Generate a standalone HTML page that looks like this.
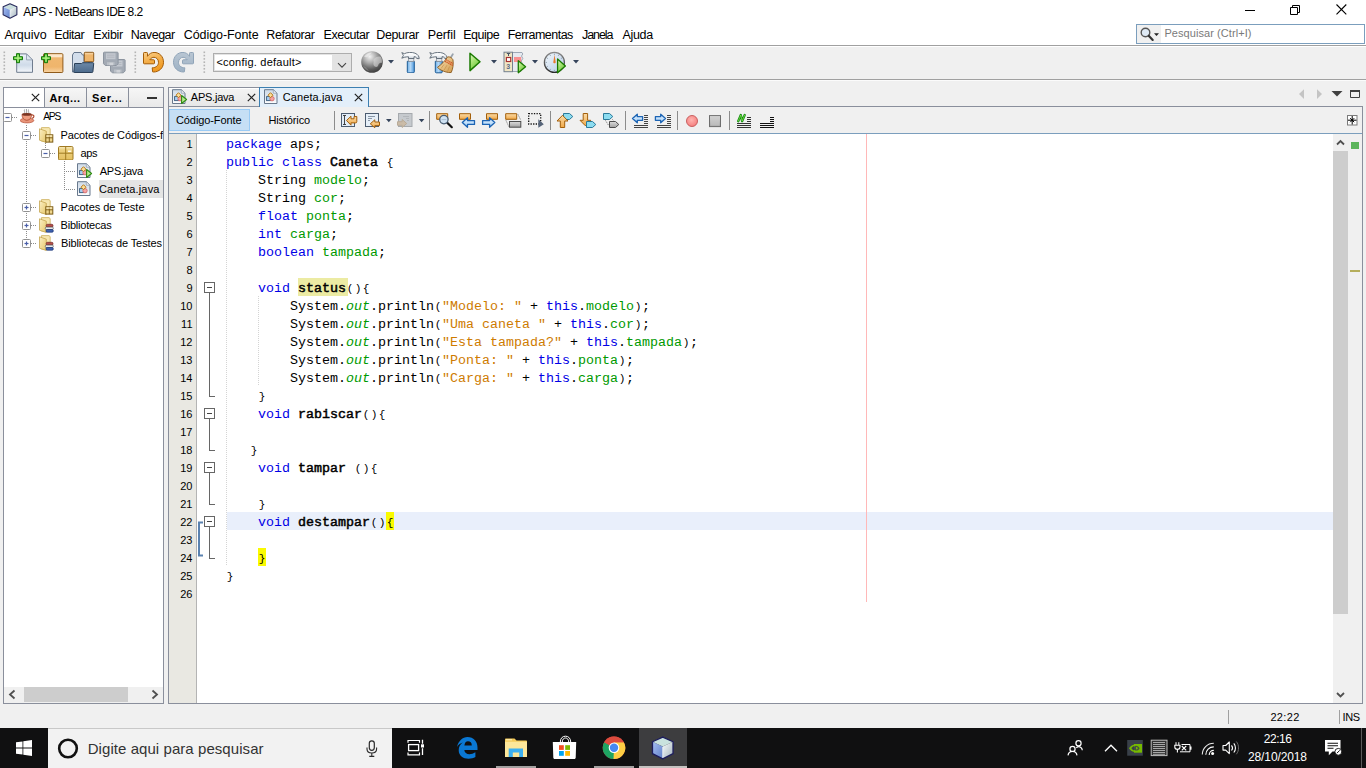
<!DOCTYPE html>
<html lang="pt-BR">
<head>
<meta charset="utf-8">
<title>APS - NetBeans IDE 8.2</title>
<style>
*{box-sizing:border-box;margin:0;padding:0}
html,body{width:1366px;height:768px;overflow:hidden;background:#f0f0f0;font-family:"Liberation Sans","DejaVu Sans",sans-serif;font-size:11px;color:#000}
body{position:relative}
div,svg,span.a{position:absolute}
.t{white-space:nowrap}
.code{left:226px;height:18px;font-family:"Liberation Mono","DejaVu Sans Mono",monospace;font-size:12px;line-height:18px;white-space:pre;color:#000;transform:scaleX(1.1109);transform-origin:0 0}
.ln{left:168.5px;width:24px;height:18px;text-align:right;font-size:11px;line-height:18px;letter-spacing:0;color:#000}
.k{color:#0000e6}.f{color:#009900}.s{color:#ce7b00}.i{color:#009900;font-style:italic}.b{font-weight:normal;-webkit-text-stroke:0.45px #000}
.p{display:inline-block;width:7.2px;font-size:10px;text-align:center;vertical-align:0.3px}
.hl{background:#ecebA3}.y{background:#fafa00}
.box{width:11px;height:11px;border:1px solid #666;background:#fff}
.box i{position:absolute;left:2px;top:4px;width:5px;height:1px;background:#444}
.vl{width:1px;background:#666}
.hz{height:1px;background:#666}
.sep{width:1px;background:#8c8c8c}
.xb{width:9px;height:9px}
</style>
</head>
<body>
<div id="titlebar-menubar" style="left:0;top:0;width:0;height:0">
<div style="left:0;top:0;width:1366px;height:45px;background:#fff"></div>
<svg style="left:2px;top:2.7px" width="16" height="16" viewBox="0 0 16 16.300"><defs><linearGradient id="cbL" x1="0" y1="0" x2="1" y2="1"><stop offset="0" stop-color="#a6bef4"/><stop offset="1" stop-color="#6080c8"/></linearGradient>
<linearGradient id="cbR" x1="0" y1="0" x2="1" y2="1"><stop offset="0" stop-color="#f6fafa"/><stop offset="1" stop-color="#a2b2bc"/></linearGradient></defs>
<path d="M8 0.700L15 3.900L8 7.200L1 3.900z" fill="#c9dedd"/>
<path d="M1 3.900L8 7.200V15.600L1 12z" fill="url(#cbL)"/>
<path d="M15 3.900L8 7.200V15.600L15 12z" fill="url(#cbR)"/>
<path d="M8 7.400V15" stroke="#eef4ff" stroke-width="0.800" opacity="0.800"/>
<path d="M8 0.700L15 3.900V12L8 15.600L1 12V3.900z" fill="none" stroke="#2a2c5e" stroke-width="1.100" stroke-linejoin="round"/></svg>
<div class="t" style="left:23.20px;top:3.5px;font-size:12px;line-height:16px;letter-spacing:-0.506px;color:#000;">APS - NetBeans IDE 8.2</div>
<div style="left:1245px;top:10px;width:10px;height:1px;background:#000"></div>
<svg style="left:1289px;top:4px" width="12" height="12" viewBox="0 0 12 12"><path d="M1.5 3.5h7v7h-7zM3.5 3.5v-2h7v7h-2" fill="none" stroke="#000" stroke-width="1"/></svg>
<svg style="left:1336px;top:4.2px" width="12" height="12" viewBox="0 0 12 12"><path d="M0.5 0.5l9.800 9.800M10.300 0.500l-9.800 9.800" fill="none" stroke="#000" stroke-width="1.1"/></svg>
<div class="t" style="left:4.40px;top:26.5px;font-size:12.5px;line-height:16px;letter-spacing:-0.026px;color:#000;">Arquivo</div>
<div class="t" style="left:54.30px;top:26.5px;font-size:12.5px;line-height:16px;letter-spacing:-0.442px;color:#000;">Editar</div>
<div class="t" style="left:93.30px;top:26.5px;font-size:12.5px;line-height:16px;letter-spacing:-0.259px;color:#000;">Exibir</div>
<div class="t" style="left:130.80px;top:26.5px;font-size:12.5px;line-height:16px;letter-spacing:-0.463px;color:#000;">Navegar</div>
<div class="t" style="left:183.80px;top:26.5px;font-size:12.5px;line-height:16px;letter-spacing:-0.078px;color:#000;">Código-Fonte</div>
<div class="t" style="left:266.30px;top:26.5px;font-size:12.5px;line-height:16px;letter-spacing:-0.422px;color:#000;">Refatorar</div>
<div class="t" style="left:323.50px;top:26.5px;font-size:12.5px;line-height:16px;letter-spacing:-0.453px;color:#000;">Executar</div>
<div class="t" style="left:376.30px;top:26.5px;font-size:12.5px;line-height:16px;letter-spacing:-0.379px;color:#000;">Depurar</div>
<div class="t" style="left:427.70px;top:26.5px;font-size:12.5px;line-height:16px;letter-spacing:-0.096px;color:#000;">Perfil</div>
<div class="t" style="left:463.20px;top:26.5px;font-size:12.5px;line-height:16px;letter-spacing:-0.487px;color:#000;">Equipe</div>
<div class="t" style="left:507.70px;top:26.5px;font-size:12.5px;line-height:16px;letter-spacing:-0.523px;color:#000;">Ferramentas</div>
<div class="t" style="left:582.00px;top:26.5px;font-size:12.5px;line-height:16px;letter-spacing:-1.072px;color:#000;">Janela</div>
<div class="t" style="left:622.50px;top:26.5px;font-size:12.5px;line-height:16px;letter-spacing:-0.334px;color:#000;">Ajuda</div>
<div style="left:1136px;top:24px;width:229px;height:20px;background:#fff;border:1px solid #7b9ebd"></div>
<div style="left:1137px;top:25px;width:24px;height:18px;background:#f0f0f0"></div>
<svg style="left:1140px;top:27px" width="20" height="15" viewBox="0 0 20 15"><circle cx="5.5" cy="5.5" r="4.3" fill="#dfeaf5" stroke="#555" stroke-width="1.4"/><path d="M8.7 8.7l4 4.2" stroke="#333" stroke-width="2.2" stroke-linecap="round"/><path d="M14 6.2h5l-2.5 2.8z" fill="#222"/></svg>
<div class="t" style="left:1164.40px;top:24.8px;font-size:11px;line-height:16px;letter-spacing:0.073px;color:#7a7a7a;">Pesquisar (Ctrl+I)</div>
<div style="left:0;top:45px;width:1366px;height:1px;background:#a0a0a0"></div>
<div style="left:0;top:46px;width:1366px;height:1px;background:#fff"></div>
</div>
<div id="main-toolbar" style="left:0;top:0;width:0;height:0">
<div style="left:0;top:79px;width:1366px;height:1px;background:#a0a0a0"></div>
<div style="left:0;top:80px;width:1366px;height:1px;background:#fbfbfb"></div>
<svg style="left:3px;top:51px" width="3" height="23" viewBox="0 0 3 23"><rect x="0.5" y="0.5" width="1.6" height="1.6" fill="#b4b4b4"/><rect x="0.5" y="3.8" width="1.6" height="1.6" fill="#b4b4b4"/><rect x="0.5" y="7.1" width="1.6" height="1.6" fill="#b4b4b4"/><rect x="0.5" y="10.4" width="1.6" height="1.6" fill="#b4b4b4"/><rect x="0.5" y="13.7" width="1.6" height="1.6" fill="#b4b4b4"/><rect x="0.5" y="17" width="1.6" height="1.6" fill="#b4b4b4"/><rect x="0.5" y="20.3" width="1.6" height="1.6" fill="#b4b4b4"/></svg>
<svg style="left:134px;top:51px" width="3" height="23" viewBox="0 0 3 23"><rect x="0.5" y="0.5" width="1.6" height="1.6" fill="#b4b4b4"/><rect x="0.5" y="3.8" width="1.6" height="1.6" fill="#b4b4b4"/><rect x="0.5" y="7.1" width="1.6" height="1.6" fill="#b4b4b4"/><rect x="0.5" y="10.4" width="1.6" height="1.6" fill="#b4b4b4"/><rect x="0.5" y="13.7" width="1.6" height="1.6" fill="#b4b4b4"/><rect x="0.5" y="17" width="1.6" height="1.6" fill="#b4b4b4"/><rect x="0.5" y="20.3" width="1.6" height="1.6" fill="#b4b4b4"/></svg>
<svg style="left:203px;top:51px" width="3" height="23" viewBox="0 0 3 23"><rect x="0.5" y="0.5" width="1.6" height="1.6" fill="#b4b4b4"/><rect x="0.5" y="3.8" width="1.6" height="1.6" fill="#b4b4b4"/><rect x="0.5" y="7.1" width="1.6" height="1.6" fill="#b4b4b4"/><rect x="0.5" y="10.4" width="1.6" height="1.6" fill="#b4b4b4"/><rect x="0.5" y="13.7" width="1.6" height="1.6" fill="#b4b4b4"/><rect x="0.5" y="17" width="1.6" height="1.6" fill="#b4b4b4"/><rect x="0.5" y="20.3" width="1.6" height="1.6" fill="#b4b4b4"/></svg>
<svg style="left:12px;top:52px" width="22" height="22" viewBox="0 0 22 22"><defs><linearGradient id="nf" x1="0" y1="0" x2="0" y2="1"><stop offset="0" stop-color="#eef3f9"/><stop offset="0.6" stop-color="#cfdbe9"/><stop offset="1" stop-color="#f4f7fb"/></linearGradient></defs>
<path d="M4.700 1.900h9.800l6 6v12.400h-15.800z" fill="url(#nf)" stroke="#6f7c8e" stroke-width="1"/><path d="M14.500 1.900v6h6z" fill="#dfe7f1" stroke="#8a97a8" stroke-width="0.800" stroke-linejoin="round"/><g transform="translate(1,1.200)"><path d="M3.5 0.5h3v3h3v3h-3v3h-3v-3h-3v-3h3z" fill="#4fc02c" stroke="#177a0c" stroke-width="1"/><path d="M4.400 1.500h1.200v2.900h2.900v1.200h-2.900v2.900h-1.200v-2.900h-2.900v-1.200h2.900z" fill="#b9f48e"/></g></svg>
<svg style="left:40px;top:52px" width="24" height="22" viewBox="0 0 24 22"><defs><linearGradient id="np" x1="0" y1="0" x2="0" y2="1"><stop offset="0" stop-color="#f0b871"/><stop offset="0.7" stop-color="#efb56c"/><stop offset="1" stop-color="#f7d3a2"/></linearGradient></defs>
<rect x="3.500" y="1.700" width="19.400" height="18.800" rx="1" fill="url(#np)" stroke="#8f5a1a" stroke-width="1"/><rect x="4.200" y="2.300" width="18" height="3" fill="#fbe7cb"/><g transform="translate(1,1.200)"><path d="M3.5 0.5h3v3h3v3h-3v3h-3v-3h-3v-3h3z" fill="#4fc02c" stroke="#177a0c" stroke-width="1"/><path d="M4.400 1.500h1.200v2.900h2.900v1.200h-2.900v2.900h-1.200v-2.900h-2.900v-1.200h2.900z" fill="#b9f48e"/></g></svg>
<svg style="left:71px;top:51px" width="24" height="23" viewBox="0 0 24 23"><defs><linearGradient id="op" x1="0" y1="0" x2="0" y2="1"><stop offset="0" stop-color="#6c89a8"/><stop offset="1" stop-color="#4d6b8c"/></linearGradient>
<linearGradient id="ob" x1="0" y1="0" x2="0" y2="1"><stop offset="0" stop-color="#fbe3c0"/><stop offset="0.3" stop-color="#efb66c"/><stop offset="1" stop-color="#eeb46a"/></linearGradient></defs>
<path d="M1.500 21v-17l1.500-2.500h7l1.500 2.500h1.500v17z" fill="#d3deeb" stroke="#66778c" stroke-width="1" stroke-linejoin="round"/>
<rect x="13.300" y="1.300" width="9.400" height="9.400" rx="0.800" fill="url(#ob)" stroke="#8f5a1a" stroke-width="1"/>
<path d="M18 11v1.500" stroke="#5a4a3a" stroke-width="1"/>
<path d="M3.600 12.500h7l1-0.800h10.300c0.600 0 0.900 0.400 0.800 1l-0.800 8c0 0.500-0.400 0.800-1 0.800h-17.300c-0.600 0-0.800-0.400-0.800-0.800z" fill="url(#op)" stroke="#2b4058" stroke-width="1" stroke-linejoin="round"/></svg>
<svg style="left:102px;top:51px" width="24" height="23" viewBox="0 0 24 23"><g transform="translate(8,8)"><path d="M0.500 1.300c0-0.500 0.300-0.800 0.800-0.800h13c0.500 0 0.800 0.300 0.800 0.800v10.700l-1.800 1.800h-11l-1.800-1.800z" fill="#a3aab4" stroke="#8c949f" stroke-width="1"/><rect x="3" y="1.500" width="9.500" height="6" fill="#c3c8cf"/><path d="M4 3.500h7.500M4 5.500h7.500" stroke="#aeb4bc" stroke-width="0.800"/><rect x="4" y="10.500" width="7.500" height="3" fill="#bcc1c8"/><rect x="6.500" y="11" width="3.500" height="2.500" fill="#d0d3d8"/></g><g transform="translate(1,0.7)"><path d="M0.500 1.300c0-0.500 0.300-0.800 0.800-0.800h13c0.500 0 0.800 0.300 0.800 0.800v10.700l-1.800 1.800h-11l-1.800-1.800z" fill="#a3aab4" stroke="#8c949f" stroke-width="1"/><rect x="3" y="1.500" width="9.500" height="6" fill="#c3c8cf"/><path d="M4 3.500h7.500M4 5.500h7.500" stroke="#aeb4bc" stroke-width="0.800"/><rect x="4" y="10.500" width="7.500" height="3" fill="#bcc1c8"/><rect x="6.500" y="11" width="3.500" height="2.500" fill="#d0d3d8"/></g></svg>
<svg style="left:142.8px;top:52.4px" width="21" height="21" viewBox="0 0 21 21"><defs><linearGradient id="ud" x1="0" y1="0" x2="0.300" y2="1"><stop offset="0" stop-color="#f9cf8c"/><stop offset="0.5" stop-color="#f4ae48"/><stop offset="1" stop-color="#f09a22"/></linearGradient></defs>
<path d="M0.500 1.300Q0.500 0.500 1.300 0.500L3.700 0.500Q4.500 0.500 4.500 1.300L4.500 4.300C6 1.600 9 0.400 11 0.400C16.500 0.400 20.500 4.500 20.500 10.300C20.500 16 16 20 10.500 20L9.600 19.800L9.200 15.800C13 15.800 15.500 13.500 15.500 10.300C15.500 7 13 5.300 11 5.300C9.500 5.300 8 6 6.800 7.700L10.800 7.800Q11.500 7.800 11.500 8.600L11.500 11Q11.500 11.800 10.700 11.800L1.300 11.800Q0.500 11.800 0.500 11Z" fill="url(#ud)" stroke="#a45c06" stroke-width="1" stroke-linejoin="round"/></svg>
<svg style="left:173px;top:52.4px" width="21" height="21" viewBox="0 0 21 21"><defs><linearGradient id="rd" x1="0" y1="0" x2="0" y2="1"><stop offset="0" stop-color="#b9c6d3"/><stop offset="1" stop-color="#9db1c4"/></linearGradient></defs>
<g transform="translate(21,0) scale(-1,1)"><path d="M0.500 1.300Q0.500 0.500 1.300 0.500L3.700 0.500Q4.500 0.500 4.500 1.300L4.500 4.300C6 1.600 9 0.400 11 0.400C16.500 0.400 20.500 4.500 20.500 10.300C20.500 16 16 20 10.500 20L9.600 19.800L9.200 15.800C13 15.800 15.500 13.500 15.500 10.300C15.500 7 13 5.300 11 5.300C9.500 5.300 8 6 6.800 7.700L10.800 7.800Q11.500 7.800 11.500 8.600L11.500 11Q11.500 11.800 10.700 11.800L1.300 11.800Q0.500 11.800 0.500 11Z" fill="url(#rd)" stroke="#90a4b8" stroke-width="1" stroke-linejoin="round"/></g></svg>
<div style="left:213px;top:53px;width:139px;height:19px;background:#e3e3e3;border:1px solid #adadad"></div>
<div style="left:215px;top:55px;width:117px;height:15px;background:#fff"></div>
<div class="t" style="left:216.40px;top:54.0px;font-size:11px;line-height:16px;letter-spacing:0.227px;color:#000;">&lt;config. default&gt;</div>
<svg style="left:337px;top:61.500px" width="10" height="7" viewBox="0 0 10 7"><path d="M1 1.2l4 4 4-4" fill="none" stroke="#444" stroke-width="1.1"/></svg>
<svg style="left:361px;top:51px" width="22" height="22" viewBox="0 0 22 22"><defs><radialGradient id="gl" cx="0.400" cy="0.250" r="0.800"><stop offset="0" stop-color="#f2f2f2"/><stop offset="0.350" stop-color="#b0b0b0"/><stop offset="0.750" stop-color="#5a5a5a"/><stop offset="1" stop-color="#3a3a3a"/></radialGradient></defs>
<circle cx="11" cy="11" r="10.800" fill="url(#gl)"/>
<path d="M12.500 8.500c2-2.500 5-3.500 7.500-2.500c1 2 1.200 4 0.800 6c-1.500-0.800-3 0.200-3.500 2c-0.500 2-2 2.500-3.500 1.500c-1.200-1-1.800-2.500-1.200-4c0.300-1-0.500-2-0.100-3z" fill="#d8d8d8" opacity="0.600"/>
<path d="M3 5.500c2-2.500 5-4 8-4c-1 1.500-3 2-4 3.500c-1 1.500-2.500 1.500-4 0.500z" fill="#ffffff" opacity="0.450"/>
<path d="M2 15c1.500 0 3 1 4 2.500c0.800 1.200 2 2 3 2.300c-3 0-5.500-1.800-7-4.800z" fill="#9a9a9a" opacity="0.500"/></svg>
<svg style="left:388px;top:59.8px" width="6" height="4" viewBox="0 0 6 4"><path d="M0 0h6l-3 3.600z" fill="#36455c"/></svg>
<svg style="left:401px;top:52px" width="19" height="21" viewBox="0 0 19 21"><defs><linearGradient id="hm" x1="0" y1="0" x2="1" y2="0"><stop offset="0" stop-color="#6fb0e8"/><stop offset="0.450" stop-color="#b4d8f6"/><stop offset="1" stop-color="#4f98dc"/></linearGradient>
<linearGradient id="hh" x1="0" y1="0" x2="0" y2="1"><stop offset="0" stop-color="#ffffff"/><stop offset="0.500" stop-color="#f4f6f8"/><stop offset="1" stop-color="#c4ccd6"/></linearGradient></defs><path d="M6.300 9.300h7v10.500c0 0.600-0.400 1-1 1h-5c-0.600 0-1-0.400-1-1z" fill="url(#hm)" stroke="#1c5a94" stroke-width="1"/>
<rect x="7.600" y="6" width="5.200" height="3.500" fill="#dfe3e8" stroke="#8a929c" stroke-width="0.800"/>
<path d="M0.800 0.600L3.400 1.700C6 0.200 11 0 14 1.200C17 2.400 18.200 4.500 18.200 6.700L15.800 6.500C15.500 5.300 14.500 4.700 13 4.700L13 6.500L7.500 6.500L7.500 4.800C6 4.800 4.500 5 3.400 5.300L0.800 6.200L2.400 3.400Z" fill="url(#hh)" stroke="#5a6673" stroke-width="0.900" stroke-linejoin="round"/></svg>
<svg style="left:429.2px;top:52px" width="25" height="21.5" viewBox="0 0 25 21.5"><defs><linearGradient id="bm" x1="0" y1="0" x2="1" y2="1"><stop offset="0" stop-color="#f8e2b6"/><stop offset="1" stop-color="#d29a4c"/></linearGradient></defs><path d="M6.300 9.300h7v10.500c0 0.600-0.400 1-1 1h-5c-0.600 0-1-0.400-1-1z" fill="url(#hm)" stroke="#1c5a94" stroke-width="1"/>
<rect x="7.600" y="6" width="5.200" height="3.500" fill="#dfe3e8" stroke="#8a929c" stroke-width="0.800"/>
<path d="M0.800 0.600L3.400 1.700C6 0.200 11 0 14 1.200C17 2.400 18.200 4.500 18.200 6.700L15.800 6.500C15.500 5.300 14.500 4.700 13 4.700L13 6.500L7.500 6.500L7.500 4.800C6 4.800 4.500 5 3.400 5.300L0.800 6.200L2.400 3.400Z" fill="url(#hh)" stroke="#5a6673" stroke-width="0.900" stroke-linejoin="round"/>
<path d="M21.800 5.500L23.800 2.300" stroke="#9aa4ae" stroke-width="1.800" stroke-linecap="round"/>
<path d="M18.300 5.200C20 4 23.500 6 24 8C24.600 12 24 17 22.200 20.500C19 21 15 19.500 12 18C10 17 9 16 8.500 15.200C12 13 16 9 18.300 5.200Z" fill="url(#bm)" stroke="#8a5a1e" stroke-width="0.900" stroke-linejoin="round"/>
<path d="M16.800 7.600L24 11.600M15.800 9.200L24 13.600" stroke="#d2582a" stroke-width="1.300" stroke-dasharray="1.400 0.500" fill="none"/>
<path d="M12 16.500l3-4M15 18.200l3-5M18.500 19.500l2-5" stroke="#c08a40" stroke-width="0.600" fill="none"/></svg>
<svg style="left:469px;top:52.2px" width="13" height="20" viewBox="0 0 13 20"><defs><linearGradient id="pl" x1="0" y1="0" x2="0.600" y2="1"><stop offset="0" stop-color="#e2f8c8"/><stop offset="0.500" stop-color="#a5e272"/><stop offset="1" stop-color="#6cc63c"/></linearGradient></defs><path d="M1 1.200l10 8.600l-10 8.800z" fill="url(#pl)" stroke="#1a7a00" stroke-width="1.500" stroke-linejoin="round"/></svg>
<svg style="left:490.5px;top:59.8px" width="6" height="4" viewBox="0 0 6 4"><path d="M0 0h6l-3 3.600z" fill="#36455c"/></svg>
<svg style="left:503px;top:51px" width="24" height="23" viewBox="0 0 24 23"><path d="M9.500 1.500h9.500l0.800 1.500l-1.300 2l1.300 2.500l-1.500 2.500l1 3l-2 3l0.500 4.500h-8.300z" fill="#e6eaf0" stroke="#8a96a6" stroke-width="0.800"/>
<rect x="1" y="1.200" width="8.500" height="19.500" fill="#f1e6c4" stroke="#74808e" stroke-width="1"/>
<rect x="11" y="6" width="7.200" height="5" fill="#f98f8f"/>
<rect x="3.400" y="6.500" width="4.300" height="4" fill="#fff" stroke="#a83232" stroke-width="1.200"/>
<path d="M3.800 2.500h3.400M5.500 2.500v2.500" stroke="#4a5666" stroke-width="1"/>
<text x="3.200" y="18.400" font-family="Liberation Sans, sans-serif" font-size="7" font-weight="bold" fill="#5a6a8a">3</text>
<path d="M15.300 9.700l7.300 6l-7.300 6z" fill="url(#pl)" stroke="#1a7a00" stroke-width="1.300" stroke-linejoin="round"/></svg>
<svg style="left:531.5px;top:59.8px" width="6" height="4" viewBox="0 0 6 4"><path d="M0 0h6l-3 3.600z" fill="#36455c"/></svg>
<svg style="left:543px;top:51px" width="24" height="23" viewBox="0 0 24 23"><defs><linearGradient id="ck" x1="0" y1="0" x2="1" y2="1"><stop offset="0" stop-color="#f4f8fc"/><stop offset="1" stop-color="#b4cce6"/></linearGradient>
<linearGradient id="ckb" x1="0" y1="0" x2="0" y2="1"><stop offset="0" stop-color="#8a8a8a"/><stop offset="1" stop-color="#2a2a2a"/></linearGradient></defs>
<circle cx="11.400" cy="11.400" r="10" fill="url(#ck)" stroke="url(#ckb)" stroke-width="1.300"/>
<g stroke="#7a8a9a" stroke-width="0.700"><path d="M11.400 2.500v1.500M11.400 18.800v1.500M2.500 11.400h1.500M6.900 3.700l0.700 1.200M3.700 6.900l1.200 0.700M3.700 15.900l1.200-0.700M6.900 19.100l0.700-1.200M15.900 3.700l-0.700 1.200M19.100 6.900l-1.200 0.700"/></g>
<path d="M11.500 3.800l1.200 7.400c0 1.400-2.400 1.400-2.400 0z" fill="#e8792c"/>
<path d="M14.600 8l7.800 7l-7.800 6.800z" fill="url(#pl)" stroke="#1a7a00" stroke-width="1.300" stroke-linejoin="round"/></svg>
<svg style="left:572.5px;top:59.8px" width="6" height="4" viewBox="0 0 6 4"><path d="M0 0h6l-3 3.600z" fill="#36455c"/></svg>
</div>
<div id="projects-panel" style="left:0;top:0;width:0;height:0">
<div style="left:3px;top:87px;width:161px;height:617px;background:#fff;border:1px solid #8a8f9c"></div>
<div style="left:4px;top:88px;width:159px;height:19px;background:linear-gradient(#f6f6f6,#e9e9e9)"></div>
<div style="left:4px;top:88px;width:40px;height:20px;background:#fff"></div>
<div style="left:4px;top:107px;width:159px;height:1px;background:#8a8f9c"></div>
<div style="left:44px;top:88px;width:1px;height:19px;background:#8a8f9c"></div>
<div style="left:86px;top:88px;width:1px;height:19px;background:#8a8f9c"></div>
<div style="left:128px;top:88px;width:1px;height:19px;background:#8a8f9c"></div>
<svg style="left:31px;top:93px" width="9" height="9" viewBox="0 0 9 9"><path d="M0.8 0.8l7.4 7.4M8.2 0.8l-7.4 7.4" stroke="#222" stroke-width="1.2" fill="none"/></svg>
<div class="t" style="left:49.40px;top:90.0px;font-size:11px;line-height:16px;letter-spacing:0.515px;color:#000;font-weight:bold;">Arq...</div>
<div class="t" style="left:92.00px;top:90.0px;font-size:11px;line-height:16px;letter-spacing:0.684px;color:#000;font-weight:bold;">Ser...</div>
<div style="left:147px;top:97px;width:10px;height:2px;background:#333"></div>
<div style="left:26px;top:125px;width:1px;height:114px;background:repeating-linear-gradient(#8c8c8c 0 1px,transparent 1px 2px)"></div>
<div style="left:45px;top:143px;width:1px;height:6px;background:repeating-linear-gradient(#8c8c8c 0 1px,transparent 1px 2px)"></div>
<div style="left:64px;top:161px;width:1px;height:29px;background:repeating-linear-gradient(#8c8c8c 0 1px,transparent 1px 2px)"></div>
<div style="left:12px;top:117px;width:6px;height:1px;background:repeating-linear-gradient(90deg,#8c8c8c 0 1px,transparent 1px 2px)"></div>
<div style="left:31px;top:135px;width:6px;height:1px;background:repeating-linear-gradient(90deg,#8c8c8c 0 1px,transparent 1px 2px)"></div>
<div style="left:50px;top:153px;width:6px;height:1px;background:repeating-linear-gradient(90deg,#8c8c8c 0 1px,transparent 1px 2px)"></div>
<div style="left:64px;top:171px;width:11px;height:1px;background:repeating-linear-gradient(90deg,#8c8c8c 0 1px,transparent 1px 2px)"></div>
<div style="left:64px;top:189px;width:11px;height:1px;background:repeating-linear-gradient(90deg,#8c8c8c 0 1px,transparent 1px 2px)"></div>
<div style="left:31px;top:207px;width:6px;height:1px;background:repeating-linear-gradient(90deg,#8c8c8c 0 1px,transparent 1px 2px)"></div>
<div style="left:31px;top:225px;width:6px;height:1px;background:repeating-linear-gradient(90deg,#8c8c8c 0 1px,transparent 1px 2px)"></div>
<div style="left:31px;top:243px;width:6px;height:1px;background:repeating-linear-gradient(90deg,#8c8c8c 0 1px,transparent 1px 2px)"></div>
<svg style="left:3px;top:113px" width="9" height="9" viewBox="0 0 9 9"><rect x="0.500" y="0.500" width="8" height="8" rx="1" fill="#fff" stroke="#919191" stroke-width="1"/><path d="M2.500 4.500h4" stroke="#4a5fa8" stroke-width="1.200"/></svg>
<svg style="left:22px;top:131px" width="9" height="9" viewBox="0 0 9 9"><rect x="0.500" y="0.500" width="8" height="8" rx="1" fill="#fff" stroke="#919191" stroke-width="1"/><path d="M2.500 4.500h4" stroke="#4a5fa8" stroke-width="1.200"/></svg>
<svg style="left:41px;top:149px" width="9" height="9" viewBox="0 0 9 9"><rect x="0.500" y="0.500" width="8" height="8" rx="1" fill="#fff" stroke="#919191" stroke-width="1"/><path d="M2.500 4.500h4" stroke="#4a5fa8" stroke-width="1.200"/></svg>
<svg style="left:22px;top:203px" width="9" height="9" viewBox="0 0 9 9"><rect x="0.500" y="0.500" width="8" height="8" rx="1" fill="#fff" stroke="#919191" stroke-width="1"/><path d="M2.500 4.500h4" stroke="#4a5fa8" stroke-width="1.200"/><path d="M4.500 2.500v4" stroke="#4a5fa8" stroke-width="1.200"/></svg>
<svg style="left:22px;top:221px" width="9" height="9" viewBox="0 0 9 9"><rect x="0.500" y="0.500" width="8" height="8" rx="1" fill="#fff" stroke="#919191" stroke-width="1"/><path d="M2.500 4.500h4" stroke="#4a5fa8" stroke-width="1.200"/><path d="M4.500 2.500v4" stroke="#4a5fa8" stroke-width="1.200"/></svg>
<svg style="left:22px;top:239px" width="9" height="9" viewBox="0 0 9 9"><rect x="0.500" y="0.500" width="8" height="8" rx="1" fill="#fff" stroke="#919191" stroke-width="1"/><path d="M2.500 4.500h4" stroke="#4a5fa8" stroke-width="1.200"/><path d="M4.500 2.500v4" stroke="#4a5fa8" stroke-width="1.200"/></svg>
<svg style="left:20px;top:109px" width="15.5" height="14.5" viewBox="0 0 15.5 14.5"><path d="M4.500 0.500c-0.600 1.500 0.800 2.200 0 4M6.500 0c-0.600 1.700 0.800 2.200 0 4.200M8.500 0.500c-0.600 1.500 0.800 2.200 0 4" stroke="#777" stroke-width="0.700" fill="none"/>
<ellipse cx="7" cy="11.500" rx="6.800" ry="2.400" fill="#e9957a" stroke="#b5523a" stroke-width="0.700"/>
<path d="M2 5.300h9.600c0 3.300-1.500 5.800-4.800 6c-3.300-0.200-4.800-2.700-4.800-6z" fill="#ee9c80" stroke="#a8452a" stroke-width="0.800"/>
<ellipse cx="6.800" cy="5.400" rx="4.700" ry="1.400" fill="#7a3422"/>
<path d="M11.600 6c2.900-0.600 3.200 2.600 0.200 3.400" fill="none" stroke="#b04a30" stroke-width="1.200"/></svg>
<svg style="left:39px;top:127px" width="15" height="16" viewBox="0 0 15 16"><defs><linearGradient id="pf" x1="0" y1="0" x2="1" y2="1"><stop offset="0" stop-color="#fbefc4"/><stop offset="1" stop-color="#e6c76a"/></linearGradient></defs>
<path d="M2.500 0.600h7.500l1.200 1v12.500h-8.700z" fill="#f7e7b0" stroke="#cdb05e" stroke-width="0.800" stroke-linejoin="round"/>
<path d="M0.500 1.800l6.800 2.400v11.300l-6.800-2.300z" fill="url(#pf)" stroke="#c4a450" stroke-width="0.800" stroke-linejoin="round"/><rect x="6.800" y="7.800" width="7" height="7.300" fill="#efd68c" stroke="#7a5a14" stroke-width="1"/><path d="M6.800 10.800h7M10.300 7.800v7.300" stroke="#7a5a14" stroke-width="0.900"/><rect x="7.400" y="8.400" width="5.800" height="1.200" fill="#f9ecc0"/></svg>
<svg style="left:58px;top:145.5px" width="15.5" height="14.5" viewBox="0 0 15.5 14.5"><defs><linearGradient id="pk" x1="0" y1="0" x2="0" y2="1"><stop offset="0" stop-color="#f8ecc0"/><stop offset="0.250" stop-color="#ecd080"/><stop offset="1" stop-color="#e4c060"/></linearGradient></defs>
<rect x="0.500" y="0.500" width="14.500" height="13.500" rx="1.200" fill="url(#pk)" stroke="#a07a22" stroke-width="1"/><path d="M0.500 7.200h14.500M7.700 0.500v13.500" stroke="#a07a22" stroke-width="1"/><rect x="10" y="4.500" width="3.200" height="1.500" fill="#fffbe8"/></svg>
<svg style="left:77px;top:163px" width="16" height="16" viewBox="0 0 16 16"><defs><linearGradient id="jf" x1="0" y1="0" x2="0" y2="1"><stop offset="0" stop-color="#cfdbe8"/><stop offset="0.650" stop-color="#e4ebf3"/><stop offset="1" stop-color="#ffffff"/></linearGradient></defs>
<path d="M0.500 0.700h8.800l3.700 3.500v10.300h-12.500z" fill="url(#jf)" stroke="#69798d" stroke-width="1" stroke-linejoin="round"/><path d="M9.300 0.700v3.500h3.700z" fill="#f2f5f9" stroke="#8a96a6" stroke-width="0.700" stroke-linejoin="round"/>
<rect x="2.600" y="7.600" width="4" height="4" fill="#a6d2f4" stroke="#3b5c7c" stroke-width="0.900"/>
<circle cx="8" cy="9.700" r="2.200" fill="#f5a3a3" stroke="#d26464" stroke-width="0.800"/>
<path d="M6.500 3.700l2.500 2.500l-2.500 2.500l-2.500-2.500z" fill="#f9dc98" stroke="#b87a1a" stroke-width="1"/><path d="M9.600 6.500l5 4l-5 4z" fill="#b4ec8e" stroke="#2f8a14" stroke-width="1.100" stroke-linejoin="round"/></svg>
<svg style="left:77px;top:181px" width="16" height="16" viewBox="0 0 16 16"><defs><linearGradient id="jf" x1="0" y1="0" x2="0" y2="1"><stop offset="0" stop-color="#cfdbe8"/><stop offset="0.650" stop-color="#e4ebf3"/><stop offset="1" stop-color="#ffffff"/></linearGradient></defs>
<path d="M0.500 0.700h8.800l3.700 3.500v10.300h-12.500z" fill="url(#jf)" stroke="#69798d" stroke-width="1" stroke-linejoin="round"/><path d="M9.300 0.700v3.500h3.700z" fill="#f2f5f9" stroke="#8a96a6" stroke-width="0.700" stroke-linejoin="round"/>
<rect x="2.600" y="7.600" width="4" height="4" fill="#a6d2f4" stroke="#3b5c7c" stroke-width="0.900"/>
<circle cx="8" cy="9.700" r="2.200" fill="#f5a3a3" stroke="#d26464" stroke-width="0.800"/>
<path d="M6.500 3.700l2.500 2.500l-2.500 2.500l-2.500-2.500z" fill="#f9dc98" stroke="#b87a1a" stroke-width="1"/></svg>
<svg style="left:39px;top:199px" width="15" height="16" viewBox="0 0 15 16"><defs><linearGradient id="pf" x1="0" y1="0" x2="1" y2="1"><stop offset="0" stop-color="#fbefc4"/><stop offset="1" stop-color="#e6c76a"/></linearGradient></defs>
<path d="M2.500 0.600h7.500l1.200 1v12.500h-8.700z" fill="#f7e7b0" stroke="#cdb05e" stroke-width="0.800" stroke-linejoin="round"/>
<path d="M0.500 1.800l6.800 2.400v11.300l-6.800-2.300z" fill="url(#pf)" stroke="#c4a450" stroke-width="0.800" stroke-linejoin="round"/><rect x="6.800" y="7.800" width="7" height="7.300" fill="#efd68c" stroke="#7a5a14" stroke-width="1"/><path d="M6.800 10.800h7M10.300 7.800v7.300" stroke="#7a5a14" stroke-width="0.900"/><rect x="7.400" y="8.400" width="5.800" height="1.200" fill="#f9ecc0"/></svg>
<svg style="left:39px;top:217px" width="15" height="16" viewBox="0 0 15 16"><defs><linearGradient id="pf" x1="0" y1="0" x2="1" y2="1"><stop offset="0" stop-color="#fbefc4"/><stop offset="1" stop-color="#e6c76a"/></linearGradient></defs>
<path d="M2.500 0.600h7.500l1.200 1v12.500h-8.700z" fill="#f7e7b0" stroke="#cdb05e" stroke-width="0.800" stroke-linejoin="round"/>
<path d="M0.500 1.800l6.800 2.400v11.300l-6.800-2.300z" fill="url(#pf)" stroke="#c4a450" stroke-width="0.800" stroke-linejoin="round"/><rect x="7.200" y="7.300" width="6.800" height="2.800" rx="1.200" fill="#b8504a" stroke="#6e2a2a" stroke-width="0.700"/><rect x="6.300" y="10.100" width="8" height="2.400" rx="1" fill="#ececec" stroke="#5a5a5a" stroke-width="0.700"/><rect x="7" y="12.500" width="7.300" height="2.700" rx="1.200" fill="#3c60ae" stroke="#1c3674" stroke-width="0.700"/></svg>
<svg style="left:39px;top:235px" width="15" height="16" viewBox="0 0 15 16"><defs><linearGradient id="pf" x1="0" y1="0" x2="1" y2="1"><stop offset="0" stop-color="#fbefc4"/><stop offset="1" stop-color="#e6c76a"/></linearGradient></defs>
<path d="M2.500 0.600h7.500l1.200 1v12.500h-8.700z" fill="#f7e7b0" stroke="#cdb05e" stroke-width="0.800" stroke-linejoin="round"/>
<path d="M0.500 1.800l6.800 2.400v11.300l-6.800-2.300z" fill="url(#pf)" stroke="#c4a450" stroke-width="0.800" stroke-linejoin="round"/><rect x="7.200" y="7.300" width="6.800" height="2.800" rx="1.200" fill="#b8504a" stroke="#6e2a2a" stroke-width="0.700"/><rect x="6.300" y="10.100" width="8" height="2.400" rx="1" fill="#ececec" stroke="#5a5a5a" stroke-width="0.700"/><rect x="7" y="12.500" width="7.300" height="2.700" rx="1.200" fill="#3c60ae" stroke="#1c3674" stroke-width="0.700"/></svg>
<div style="left:99px;top:180px;width:64px;height:18px;background:#e4e4e4"></div>
<div style="left:4px;top:108px;width:158.5px;height:560px;overflow:hidden">
<div class="t" style="left:39.20px;top:1.0px;font-size:10.3px;line-height:16px;letter-spacing:-1.204px;color:#000;">APS</div>
<div class="t" style="left:56.60px;top:19.0px;font-size:11px;line-height:16px;letter-spacing:-0.143px;color:#000;">Pacotes de Códigos-f</div>
<div class="t" style="left:76.50px;top:37.0px;font-size:11px;line-height:16px;letter-spacing:-0.345px;color:#000;">aps</div>
<div class="t" style="left:95.80px;top:55.0px;font-size:11px;line-height:16px;letter-spacing:-0.281px;color:#000;">APS.java</div>
<div class="t" style="left:95.00px;top:73.0px;font-size:11px;line-height:16px;letter-spacing:0.173px;color:#000;">Caneta.java</div>
<div class="t" style="left:56.60px;top:91.0px;font-size:11px;line-height:16px;letter-spacing:-0.018px;color:#000;">Pacotes de Teste</div>
<div class="t" style="left:56.60px;top:109.0px;font-size:11px;line-height:16px;letter-spacing:-0.209px;color:#000;">Bibliotecas</div>
<div class="t" style="left:56.90px;top:127.0px;font-size:11px;line-height:16px;letter-spacing:-0.101px;color:#000;">Bibliotecas de Testes</div>
</div>
<div style="left:4px;top:687px;width:159px;height:16px;background:#f0f0f0"></div>
<div style="left:24px;top:687px;width:104px;height:15px;background:#cdcdcd"></div>
<svg style="left:8px;top:689px" width="9" height="11" viewBox="0 0 9 11"><path d="M6.5 1.5l-4.5 4 4.5 4" fill="none" stroke="#505050" stroke-width="1.8"/></svg>
<svg style="left:150px;top:689px" width="9" height="11" viewBox="0 0 9 11"><path d="M2.5 1.5l4.5 4-4.5 4" fill="none" stroke="#505050" stroke-width="1.8"/></svg>
</div>
<div id="editor" style="left:0;top:0;width:0;height:0">
<div style="left:168px;top:106px;width:1195px;height:598px;background:#fff;border:1px solid #8a8f9c"></div>
<div style="left:168px;top:87px;width:92px;height:19px;background:linear-gradient(#fff 0 1px,#f3f3f3 1px,#e7e7e7);border:1px solid #8a8f9c;border-bottom:none"></div>
<div style="left:259px;top:87px;width:109.500px;height:20px;background:#e3effa;border:1px solid #3c7fb1;border-bottom:none"></div>
<svg style="left:172px;top:89px" width="16" height="16" viewBox="0 0 16 16"><defs><linearGradient id="jf" x1="0" y1="0" x2="0" y2="1"><stop offset="0" stop-color="#cfdbe8"/><stop offset="0.650" stop-color="#e4ebf3"/><stop offset="1" stop-color="#ffffff"/></linearGradient></defs>
<path d="M0.500 0.700h8.800l3.700 3.500v10.300h-12.500z" fill="url(#jf)" stroke="#69798d" stroke-width="1" stroke-linejoin="round"/><path d="M9.300 0.700v3.500h3.700z" fill="#f2f5f9" stroke="#8a96a6" stroke-width="0.700" stroke-linejoin="round"/>
<rect x="2.600" y="7.600" width="4" height="4" fill="#a6d2f4" stroke="#3b5c7c" stroke-width="0.900"/>
<circle cx="8" cy="9.700" r="2.200" fill="#f5a3a3" stroke="#d26464" stroke-width="0.800"/>
<path d="M6.500 3.700l2.500 2.500l-2.500 2.500l-2.500-2.500z" fill="#f9dc98" stroke="#b87a1a" stroke-width="1"/><path d="M9.600 6.500l5 4l-5 4z" fill="#b4ec8e" stroke="#2f8a14" stroke-width="1.100" stroke-linejoin="round"/></svg>
<svg style="left:264px;top:89px" width="16" height="16" viewBox="0 0 16 16"><defs><linearGradient id="jf" x1="0" y1="0" x2="0" y2="1"><stop offset="0" stop-color="#cfdbe8"/><stop offset="0.650" stop-color="#e4ebf3"/><stop offset="1" stop-color="#ffffff"/></linearGradient></defs>
<path d="M0.500 0.700h8.800l3.700 3.500v10.300h-12.500z" fill="url(#jf)" stroke="#69798d" stroke-width="1" stroke-linejoin="round"/><path d="M9.300 0.700v3.500h3.700z" fill="#f2f5f9" stroke="#8a96a6" stroke-width="0.700" stroke-linejoin="round"/>
<rect x="2.600" y="7.600" width="4" height="4" fill="#a6d2f4" stroke="#3b5c7c" stroke-width="0.900"/>
<circle cx="8" cy="9.700" r="2.200" fill="#f5a3a3" stroke="#d26464" stroke-width="0.800"/>
<path d="M6.500 3.700l2.500 2.500l-2.500 2.500l-2.500-2.500z" fill="#f9dc98" stroke="#b87a1a" stroke-width="1"/></svg>
<div class="t" style="left:190.80px;top:89.0px;font-size:11px;line-height:16px;letter-spacing:-0.231px;color:#000;">APS.java</div>
<div class="t" style="left:282.70px;top:89.0px;font-size:11px;line-height:16px;letter-spacing:0.109px;color:#000;">Caneta.java</div>
<svg style="left:247px;top:93px" width="9" height="9" viewBox="0 0 9 9"><path d="M0.8 0.8l7.4 7.4M8.2 0.8l-7.4 7.4" stroke="#222" stroke-width="1.2" fill="none"/></svg>
<svg style="left:354px;top:93px" width="9" height="9" viewBox="0 0 9 9"><path d="M0.8 0.8l7.4 7.4M8.2 0.8l-7.4 7.4" stroke="#222" stroke-width="1.2" fill="none"/></svg>
<svg style="left:1298px;top:89px" width="66" height="11" viewBox="0 0 66 11"><path d="M6 0.3v9.6l-5-4.8z" fill="#c4c4c4"/><path d="M19 0.3v9.6l5-4.8z" fill="#c4c4c4"/><path d="M33.5 2h11l-5.5 5.5z" fill="#404040"/><path d="M52.5 1.500v7h9v-7z" fill="none" stroke="#404040" stroke-width="1"/><path d="M52 1h10v2h-10z" fill="#404040"/></svg>
<div style="left:169px;top:107px;width:1193px;height:26px;background:#f0f0f0"></div>
<div style="left:169px;top:133px;width:1193px;height:1px;background:#7b9ebd"></div>
<div style="left:169px;top:109px;width:81px;height:22px;background:#c6dff5;border:1px solid #9acbf5"></div>
<div class="t" style="left:176.00px;top:112.2px;font-size:11px;line-height:16px;letter-spacing:-0.095px;color:#000;">Código-Fonte</div>
<div class="t" style="left:268.50px;top:112.2px;font-size:11px;line-height:16px;letter-spacing:-0.143px;color:#000;">Histórico</div>
<div class="sep" style="left:334px;top:111px;height:19px"></div>
<div class="sep" style="left:429px;top:111px;height:19px"></div>
<div class="sep" style="left:550px;top:111px;height:19px"></div>
<div class="sep" style="left:625px;top:111px;height:19px"></div>
<div class="sep" style="left:677px;top:111px;height:19px"></div>
<div class="sep" style="left:729px;top:111px;height:19px"></div>
<svg style="left:336px;top:108px" width="444" height="24" viewBox="336 108 444 24"><defs><linearGradient id="eo" x1="0" y1="0" x2="0" y2="1"><stop offset="0" stop-color="#fbdca8"/><stop offset="1" stop-color="#f0a848"/></linearGradient>
<linearGradient id="eb" x1="0" y1="0" x2="0" y2="1"><stop offset="0" stop-color="#e4f2fe"/><stop offset="1" stop-color="#a4d0f8"/></linearGradient>
<linearGradient id="eg" x1="0" y1="0" x2="0" y2="1"><stop offset="0" stop-color="#dcdcdc"/><stop offset="1" stop-color="#a0a0a0"/></linearGradient>
<radialGradient id="rc" cx="0.450" cy="0.400" r="0.650"><stop offset="0" stop-color="#ffb4b0"/><stop offset="1" stop-color="#f47c7c"/></radialGradient></defs><rect x="341.500" y="113.500" width="13" height="13" fill="#e2edf8" stroke="#4c5c70"/><path d="M343 115.500h3M344.500 115.500v9M343 124.500h3" stroke="#333" stroke-width="0.900" fill="none"/><path d="M346.500 120.500l4.500-4.300v2.600h3v-2.300h2.800v5.200c0 0.800-0.400 1.200-1.200 1.200h-4.600v2.300z" fill="url(#eo)" stroke="#a35f0b" stroke-width="1" stroke-linejoin="round"/><rect x="365.500" y="113.500" width="13" height="13" fill="#e6eff8" stroke="#4c5c70"/><path d="M368 116.500h7M368 118.500h4M368 120.500h2" stroke="#8a98a8" stroke-width="1"/><path d="M370.300 123.800l4.500-4v2.200h4.700v3.600h-4.700v2.200z" fill="url(#eo)" stroke="#a35f0b" stroke-width="1" stroke-linejoin="round"/><path d="M386 119h5.600l-2.800 3.300z" fill="#36455c"/><rect x="398.500" y="113.500" width="13.500" height="13" fill="#c6cace" stroke="#a6aaae"/><path d="M403 116.500h6M406 118.500h3M407 120.500h2" stroke="#b2b6ba" stroke-width="1"/><path d="M406.700 123.500l-4.500-4v2.200h-4.700v3.600h4.700v2.200z" fill="#cbbca8" stroke="#b9ab98" stroke-width="1" stroke-linejoin="round"/><path d="M418.800 119h5.600l-2.800 3.300z" fill="#36455c"/><rect x="436.700" y="113.700" width="11" height="5.600" fill="url(#eo)" stroke="#a35f0b" stroke-width="1" stroke-linejoin="round"/><path d="M447 122.500l4.800 4.700" stroke="#111" stroke-width="2.200" stroke-linecap="round"/><circle cx="443.900" cy="119.600" r="4.200" fill="#cfe2f2" stroke="#4a5e74" stroke-width="1.300"/><path d="M441.500 119.600h4.800" stroke="#a9bfd4" stroke-width="1"/><rect x="459.500" y="113.700" width="11" height="5.600" fill="url(#eo)" stroke="#a35f0b" stroke-width="1" stroke-linejoin="round"/><path d="M462.300 122.500l5.200-4.800v2.900h7v3.800h-7v2.900z" fill="url(#eb)" stroke="#1c64b4" stroke-width="1.300" stroke-linejoin="round"/><rect x="486.500" y="113.700" width="11" height="5.600" fill="url(#eo)" stroke="#a35f0b" stroke-width="1" stroke-linejoin="round"/><path d="M494.800 122.500l-5.200-4.800v2.900h-7v3.800h7v2.900z" fill="url(#eb)" stroke="#1c64b4" stroke-width="1.300" stroke-linejoin="round"/><rect x="505.700" y="113.700" width="11" height="5.600" fill="url(#eo)" stroke="#a35f0b" stroke-width="1" stroke-linejoin="round"/><path d="M506 120.500l3 6.500M518 114.500l3 6" stroke="#555" stroke-width="0.900" stroke-dasharray="1 1.200" fill="none"/><rect x="509.500" y="121.500" width="11.300" height="5.700" fill="url(#eg)" stroke="#4c4c4c" stroke-width="1"/><rect x="528.700" y="113.700" width="12" height="10.300" fill="none" stroke="#111" stroke-width="1.300" stroke-dasharray="1.300 1.300"/><path d="M538.300 119.300l5.500 5l-5.500 3.500z" fill="#566479"/><path d="M563.500 113.500h6l3.300 3l-3.300 3h-6z" fill="#8cdcf0" stroke="#2a7a9a" stroke-width="1" stroke-linejoin="round"/><path d="M562.500 115.300l5.500 5.700h-3.300v6.500h-4.400v-6.500h-3.300z" fill="url(#eo)" stroke="#a35f0b" stroke-width="1" stroke-linejoin="round"/><path d="M585.400 125.800l-5.400-5.500h3.200v-6.800h4.400v6.800h3.200z" fill="url(#eo)" stroke="#a35f0b" stroke-width="1" stroke-linejoin="round"/><path d="M586.500 121.500h6l3.300 3l-3.300 3h-6z" fill="#8cdcf0" stroke="#2a7a9a" stroke-width="1" stroke-linejoin="round"/><path d="M603.500 113.500h6l3.300 3l-3.300 3h-6z" fill="#8cdcf0" stroke="#2a7a9a" stroke-width="1" stroke-linejoin="round"/><path d="M605.500 120.500l3.500 5.500M612.500 119.500l2 2" stroke="#555" stroke-width="0.900" stroke-dasharray="1 1.200" fill="none"/><path d="M609.500 121.500h6l3.300 3l-3.300 3h-6z" fill="url(#eg)" stroke="#4c4c4c" stroke-width="1" stroke-linejoin="round"/><path d="M632.500 118.500l4.800-4.300v2.500h5.300v3.600h-5.300v2.500z" fill="url(#eb)" stroke="#1c64b4" stroke-width="1.300" stroke-linejoin="round"/><path d="M644 115.500h4M644 117.500h4M644 119.500h4M644 121.500h4M644 123.500h4M634 125.500h14M634 127.500h14" stroke="#444" stroke-width="1"/><path d="M665.500 118.500l-4.800-4.300v2.500h-5.300v3.600h5.300v2.500z" fill="url(#eb)" stroke="#1c64b4" stroke-width="1.300" stroke-linejoin="round"/><path d="M667 115.500h4M667 117.500h4M667 119.500h4M667 121.500h4M667 123.500h4M657 125.500h14M657 127.500h14" stroke="#444" stroke-width="1"/><circle cx="692" cy="121" r="5.500" fill="url(#rc)" stroke="#c45656" stroke-width="0.900"/><rect x="709.500" y="115.600" width="11" height="11" fill="url(#eg)" stroke="#6e6e6e" stroke-width="1"/><rect x="710.500" y="116.600" width="9" height="9" fill="#c9c9c9" opacity="0.600"/><path d="M738.200 121.200l2.600-6.200l1.300 6.200l2.600-6.200" stroke="#118a11" stroke-width="2.300" fill="none" stroke-linejoin="round" stroke-linecap="round"/><path d="M738.200 121.200l2.600-6.200l1.300 6.200l2.600-6.200" stroke="#7be04a" stroke-width="0.800" fill="none" stroke-linejoin="round" stroke-linecap="round"/><path d="M747 117.500h4M747 119.500h4M747 121.500h4M737 123.500h14M737 125.500h14M737 127.500h14" stroke="#333" stroke-width="1"/><path d="M770 117.500h4M770 119.500h4M770 121.500h4M760 123.500h14M760 125.500h14M760 127.500h14" stroke="#111" stroke-width="1"/></svg>
<svg style="left:1347px;top:115px" width="10.5" height="10.5" viewBox="0 0 10.5 10.5"><rect x="0.500" y="0.500" width="9.500" height="9.500" fill="#fff" stroke="#7a7a7a"/><path d="M5.200 1v8.500M1 5.200h8.500" stroke="#000" stroke-width="1"/><path d="M3.200 3.200l4 4M7.200 3.200l-4 4" stroke="#000" stroke-width="1"/></svg>
<div style="left:169px;top:134px;width:27px;height:569px;background:#e9e8e2"></div>
<div style="left:196px;top:134px;width:1px;height:569px;background:#b4b4b4"></div>
<div style="left:1333px;top:134px;width:29px;height:569px;background:#f0f0f0"></div>
<div style="left:1333px;top:151px;width:15px;height:463px;background:#cdcdcd"></div>
<svg style="left:1336px;top:139px" width="9" height="7" viewBox="0 0 9 7"><path d="M1 5.5l3.5-3.5 3.5 3.5" fill="none" stroke="#505050" stroke-width="1.8"/></svg>
<svg style="left:1336px;top:692px" width="9" height="7" viewBox="0 0 9 7"><path d="M1 1l3.5 3.5 3.5-3.5" fill="none" stroke="#505050" stroke-width="1.8"/></svg>
<div style="left:1351px;top:142px;width:8px;height:7px;background:#5cb55c;border:1px solid #d8c8b8;border-width:0 0 0 0"></div>
<div style="left:1350px;top:270px;width:10px;height:2px;background:#b5ae5c"></div>
<div style="left:227px;top:512px;width:1106px;height:18px;background:#e9effb"></div>
<div style="left:866px;top:134px;width:1px;height:468px;background:#ffb8b8"></div>
<div style="left:226px;top:170px;width:1px;height:396px;background:repeating-linear-gradient(#d4d4d4 0 1px,transparent 1px 2px)"></div>
<div style="left:258px;top:296px;width:1px;height:90px;background:repeating-linear-gradient(#d4d4d4 0 1px,transparent 1px 2px)"></div>
<div class="y" style="left:386px;top:512px;width:8px;height:18px"></div>
<div class="y" style="left:258px;top:548px;width:8px;height:18px"></div>
<div class="hl" style="left:298px;top:278px;width:50px;height:18px"></div>
<div class="ln" style="top:135px">1</div>
<div class="code" style="top:136px"><span class="k">package</span> aps;</div>
<div class="ln" style="top:153px">2</div>
<div class="code" style="top:154px"><span class="k">public</span> <span class="k">class</span> <span class="b">Caneta</span> <span class="p">{</span></div>
<div class="ln" style="top:171px">3</div>
<div class="code" style="top:172px">    String <span class="f">modelo</span>;</div>
<div class="ln" style="top:189px">4</div>
<div class="code" style="top:190px">    String <span class="f">cor</span>;</div>
<div class="ln" style="top:207px">5</div>
<div class="code" style="top:208px">    <span class="k">float</span> <span class="f">ponta</span>;</div>
<div class="ln" style="top:225px">6</div>
<div class="code" style="top:226px">    <span class="k">int</span> <span class="f">carga</span>;</div>
<div class="ln" style="top:243px">7</div>
<div class="code" style="top:244px">    <span class="k">boolean</span> <span class="f">tampada</span>;</div>
<div class="ln" style="top:261px">8</div>
<div class="ln" style="top:279px">9</div>
<div class="code" style="top:280px">    <span class="k">void</span> <span class="b">status</span><span class="p">(</span><span class="p">)</span><span class="p">{</span></div>
<div class="ln" style="top:297px">10</div>
<div class="code" style="top:298px">        System.<span class="i">out</span>.println<span class="p">(</span><span class="s">&quot;Modelo: &quot;</span> + <span class="k">this</span>.<span class="f">modelo</span><span class="p">)</span>;</div>
<div class="ln" style="top:315px">11</div>
<div class="code" style="top:316px">        System.<span class="i">out</span>.println<span class="p">(</span><span class="s">&quot;Uma caneta &quot;</span> + <span class="k">this</span>.<span class="f">cor</span><span class="p">)</span>;</div>
<div class="ln" style="top:333px">12</div>
<div class="code" style="top:334px">        System.<span class="i">out</span>.println<span class="p">(</span><span class="s">&quot;Esta tampada?&quot;</span> + <span class="k">this</span>.<span class="f">tampada</span><span class="p">)</span>;</div>
<div class="ln" style="top:351px">13</div>
<div class="code" style="top:352px">        System.<span class="i">out</span>.println<span class="p">(</span><span class="s">&quot;Ponta: &quot;</span> + <span class="k">this</span>.<span class="f">ponta</span><span class="p">)</span>;</div>
<div class="ln" style="top:369px">14</div>
<div class="code" style="top:370px">        System.<span class="i">out</span>.println<span class="p">(</span><span class="s">&quot;Carga: &quot;</span> + <span class="k">this</span>.<span class="f">carga</span><span class="p">)</span>;</div>
<div class="ln" style="top:387px">15</div>
<div class="code" style="top:388px">    <span class="p">}</span></div>
<div class="ln" style="top:405px">16</div>
<div class="code" style="top:406px">    <span class="k">void</span> <span class="b">rabiscar</span><span class="p">(</span><span class="p">)</span><span class="p">{</span></div>
<div class="ln" style="top:423px">17</div>
<div class="ln" style="top:441px">18</div>
<div class="code" style="top:442px">   <span class="p">}</span></div>
<div class="ln" style="top:459px">19</div>
<div class="code" style="top:460px">    <span class="k">void</span> <span class="b">tampar</span> <span class="p">(</span><span class="p">)</span><span class="p">{</span></div>
<div class="ln" style="top:477px">20</div>
<div class="ln" style="top:495px">21</div>
<div class="code" style="top:496px">    <span class="p">}</span></div>
<div class="ln" style="top:513px">22</div>
<div class="code" style="top:514px">    <span class="k">void</span> <span class="b">destampar</span><span class="p">(</span><span class="p">)</span><span class="p">{</span></div>
<div class="ln" style="top:531px">23</div>
<div class="ln" style="top:549px">24</div>
<div class="code" style="top:550px">    <span class="p">}</span></div>
<div class="ln" style="top:567px">25</div>
<div class="code" style="top:568px"><span class="p">}</span></div>
<div class="ln" style="top:585px">26</div>
<div class="box" style="left:204px;top:282px"><i></i></div><div class="vl" style="left:209px;top:293px;height:103px"></div><div class="hz" style="left:209px;top:396px;width:6px"></div>
<div class="box" style="left:204px;top:408px"><i></i></div><div class="vl" style="left:209px;top:419px;height:31px"></div><div class="hz" style="left:209px;top:450px;width:6px"></div>
<div class="box" style="left:204px;top:462px"><i></i></div><div class="vl" style="left:209px;top:473px;height:31px"></div><div class="hz" style="left:209px;top:504px;width:6px"></div>
<div class="box" style="left:204px;top:516px"><i></i></div><div class="vl" style="left:209px;top:527px;height:31px"></div><div class="hz" style="left:209px;top:558px;width:6px"></div>
<svg style="left:197px;top:521px" width="7" height="36" viewBox="0 0 7 36"><path d="M6 1.5h-4v33h4" fill="none" stroke="#5a82b0" stroke-width="2"/></svg>
</div>
<div id="statusbar" style="left:0;top:0;width:0;height:0">
<div class="sep" style="left:1228px;top:710px;height:14px;background:#a0a0a0"></div>
<div class="sep" style="left:1339px;top:710px;height:14px;background:#a0a0a0"></div>
<div class="t" style="left:1270.40px;top:709.0px;font-size:11px;line-height:16px;letter-spacing:0.355px;color:#000;">22:22</div>
<div class="t" style="left:1342.50px;top:709.0px;font-size:11px;line-height:16px;letter-spacing:-0.346px;color:#000;">INS</div>
</div>
<div id="windows-taskbar" style="left:0;top:0;width:0;height:0">
<div style="left:0;top:728px;width:1366px;height:40px;background:#101011"></div>
<div style="left:48px;top:728px;width:344px;height:40px;background:#f2f2f2;border-top:1px solid #c8c8c8"></div>
<svg style="left:0;top:728px" width="1366" height="40" viewBox="0 728 1366 40"><path d="M16 742.300l6.500-0.900v6.200h-6.500zM23.300 741.300l8.700-1.300v7.600h-8.700zM16 748.400h6.500v6.200l-6.500-0.900zM23.300 748.400h8.700v7.600l-8.700-1.300z" fill="#fff"/><circle cx="68" cy="748.500" r="8.800" fill="none" stroke="#111" stroke-width="2.600"/><rect x="369.300" y="740.800" width="5" height="9.500" rx="2.500" fill="none" stroke="#2a2a2a" stroke-width="1.200"/><path d="M367 747.500v1.500c0 2.500 2 4 4.800 4s4.800-1.500 4.800-4v-1.500M371.800 753v3M369.300 756.400h5" fill="none" stroke="#2a2a2a" stroke-width="1.100"/><path d="M408 742.800v-2.300h11.500v2.300M408 752.500v2.300h11.500v-2.300" fill="none" stroke="#fff" stroke-width="1.200"/><rect x="408.600" y="744.600" width="10" height="6" fill="none" stroke="#fff" stroke-width="1.300"/><path d="M422.500 739.700v4M422.500 748.300v6.800" fill="none" stroke="#fff" stroke-width="1.300"/><rect x="421" y="744.300" width="3" height="3.200" fill="#fff"/><g transform="translate(457,737)"><path fill-rule="evenodd" fill="#0a78d4" d="M0 9.900C1.500 4 5.500 0 10.500 0C16.500 0 20.500 4.500 20.500 10.500V13H7.300C7.500 15.500 9.500 17.200 12.500 17.200C14.500 17.200 16.500 16.500 18.400 15.200V20C16.500 21.100 14.300 21.700 11.500 21.700C6 21.700 1.700 18.500 1.700 13.200C1.700 10 3.200 7.300 5.800 5.600C3.500 6.300 1.500 7.800 0 9.900ZM7.400 8.400H14.800C14.800 5.800 13.300 4.300 11 4.300C9 4.300 7.700 5.900 7.400 8.400Z"/></g><g transform="translate(505,738.500)"><path d="M0 1C0 0.400 0.400 0 1 0H9.500L11.500 2H21c0.600 0 1 0.400 1 1V18.500H0Z" fill="#f5cb58"/><rect x="0" y="3.200" width="22" height="15.300" fill="#fde79a"/><rect x="1" y="0.800" width="6" height="1" fill="#fff3c4"/><path d="M3.700 18.500V10H18V18.500H14.200V14H7.800V18.500Z" fill="#3db0f0"/></g><rect x="496" y="766" width="40" height="2" fill="#a3a1a0"/><path d="M560.300 742c0-3.800 2.300-5.800 5.200-5.800s5.200 2 5.200 5.800M562.300 742c0-2.600 1.400-4 3.200-4s3.200 1.400 3.200 4" fill="none" stroke="#fff" stroke-width="1"/><path d="M552.800 742h23.400l-0.500 15.500c0 0.900-0.500 1.500-1.500 1.500h-19.400c-1 0-1.500-0.600-1.500-1.500z" fill="#fff"/><rect x="559" y="745.200" width="4.800" height="4.700" fill="#f25022"/><rect x="565.200" y="745.200" width="4.800" height="4.700" fill="#7fba00"/><rect x="559" y="751" width="4.800" height="4.800" fill="#00a4ef"/><rect x="565.200" y="751" width="4.800" height="4.800" fill="#ffb900"/><g transform="translate(614,747.800)"><circle r="11.300" fill="#dd4b3e"/><path d="M0 0L-9.790 -5.650A11.300 11.300 0 0 0 -0.500 11.290L4.700 2.700Z" fill="#1da462"/><path d="M0 0L-0.500 11.290A11.300 11.300 0 0 0 9.790 -5.650H0Z" fill="#ffce44"/><path d="M-9.790 -5.650A11.300 11.300 0 0 1 9.790 -5.650H0L-4.700 -2.700Z" fill="#dd4b3e"/><circle r="5.300" fill="#fff"/><circle r="4.200" fill="#4688f1"/></g><rect x="594" y="766" width="40" height="2" fill="#a3a1a0"/><rect x="639" y="728" width="48" height="40" fill="#3d3d3f"/><rect x="639" y="766" width="48" height="2" fill="#c4c2c0"/><g transform="translate(651,736) scale(1.470)"><path d="M8 0.700L15 3.900L8 7.200L1 3.900z" fill="#c9e2de"/><path d="M1 3.900L8 7.200V15.600L1 12z" fill="url(#cbL)"/><path d="M15 3.900L8 7.200V15.600L15 12z" fill="url(#cbR)"/><path d="M8 7.400V15" stroke="#eef4ff" stroke-width="0.800" opacity="0.800"/><path d="M8 0.700L15 3.900V12L8 15.600L1 12V3.900z" fill="none" stroke="#1c1c5c" stroke-width="0.900" stroke-linejoin="round"/></g><circle cx="1078.500" cy="743.200" r="2.600" fill="none" stroke="#fff" stroke-width="1.200"/><circle cx="1072.500" cy="748.900" r="2.600" fill="none" stroke="#fff" stroke-width="1.200"/><path d="M1068 755.300c0.400-2.700 2-4 4.500-4s4.100 1.300 4.500 4M1076.300 747.800c1.400-1.200 3.400-1.200 4.600-0.300c0.900 0.700 1.300 1.600 1.400 2.700" fill="none" stroke="#fff" stroke-width="1.200"/><path d="M1105 751.200l6-6 6 6" fill="none" stroke="#fff" stroke-width="1.300"/><rect x="1127.200" y="740" width="15.600" height="15.700" fill="#394049"/><path d="M1134 744h8v8.700h-8z" fill="#76b900"/><path d="M1129 748.300c1.500-2.600 4-4 7-3.800v1.300c-2-0.200-3.600 0.800-4.600 2.400c1 1.600 2.600 2.600 4.600 2.300c1.500-0.200 2.500-1.200 2.800-2.300c-0.600-1-1.600-1.500-2.800-1.400v-1.100c2-0.100 3.600 0.900 4.400 2.500c-0.800 2.300-2.800 3.700-5 3.800c-2.800 0.100-5-1.300-6.400-3.700z" fill="#76b900"/><path d="M1136 745.800c1.600 0 3 1 3.600 2.400c-0.500 1.400-1.800 2.300-3.400 2.400c-1.300 0-2.500-0.800-3.200-2.300c0.700-1.500 1.800-2.400 3-2.500z" fill="#394049" opacity="0.850"/><path d="M1136 747c0.800 0 1.500 0.500 1.900 1.200c-0.400 0.800-1.100 1.200-1.900 1.200z" fill="#76b900"/><rect x="1151.200" y="740.200" width="15.800" height="15.400" fill="#333" stroke="#bdbdbd" stroke-width="1"/><path d="M1153 742.500h12M1153 744.500h12M1153 746.500h12M1153 748.500h12M1153 750.500h12M1153 752.500h12M1153 754.300h12" stroke="#b4b4b4" stroke-width="0.900"/><path d="M1176 742.200v2.800M1178.800 742.200v2.800" fill="none" stroke="#fff" stroke-width="1"/><path d="M1174.800 745.200h5.200v1.800c0 1.500-1.100 2.300-2.600 2.300s-2.600-0.800-2.600-2.300zM1177.400 749.300v3.200" fill="none" stroke="#fff" stroke-width="1.100"/><path d="M1181.500 744.500h8.500v7.300h-10" fill="none" stroke="#fff" stroke-width="1"/><rect x="1190" y="746.500" width="1.500" height="3.200" fill="#fff"/><path d="M1181.800 746l4.400 4.400M1186.200 746l-4.400 4.400" stroke="#fff" stroke-width="1.100"/><path d="M1202.300 754.500c0-6.200 5-11.300 11.500-11.300" fill="none" stroke="#e8e8e8" stroke-width="1.100"/><path d="M1205.800 754.800c0-4.400 3.500-7.900 8-7.900" fill="none" stroke="#fff" stroke-width="1.100"/><path d="M1209.200 755c0-2.600 2-4.600 4.600-4.600" fill="none" stroke="#fff" stroke-width="1.100"/><circle cx="1212.600" cy="753.600" r="1.500" fill="#fff"/><path d="M1223 745.500h2.700l3.600-3.500v11.600l-3.600-3.500h-2.700z" fill="none" stroke="#fff" stroke-width="1.100" stroke-linejoin="round"/><path d="M1231.500 745.300c1.200 1.500 1.200 3.700 0 5.200M1233.800 743.300c2.200 2.600 2.200 6.600 0 9.200" fill="none" stroke="#fff" stroke-width="1.100"/><path d="M1236.300 741.500c3 3.600 3 9.200 0 12.800" fill="none" stroke="#6a6a6a" stroke-width="1"/><path d="M1325 740h15.500v11.500h-8l-3.700 3.700v-3.700h-3.800z" fill="#fff"/><path d="M1327.500 743.300h10.500M1327.500 745.800h10.500M1327.500 748.300h6" stroke="#111" stroke-width="1.100"/><circle cx="1338.300" cy="751.800" r="3.400" fill="#fff" stroke="#111" stroke-width="0.900"/><path d="M1336.800 753.300l3-3" stroke="#111" stroke-width="1"/><rect x="1361" y="728" width="1" height="40" fill="#5a5a5a"/></svg>
<div class="t" style="left:87.70px;top:740.5px;font-size:15px;line-height:16px;letter-spacing:0.063px;color:#333;line-height:20px;margin-top:-2px;">Digite aqui para pesquisar</div>
<div class="t" style="left:1263.70px;top:731.0px;font-size:12px;line-height:16px;letter-spacing:-0.445px;color:#fff;">22:16</div>
<div class="t" style="left:1248.00px;top:748.5px;font-size:12px;line-height:16px;letter-spacing:-0.115px;color:#fff;">28/10/2018</div>
</div>
</body>
</html>
